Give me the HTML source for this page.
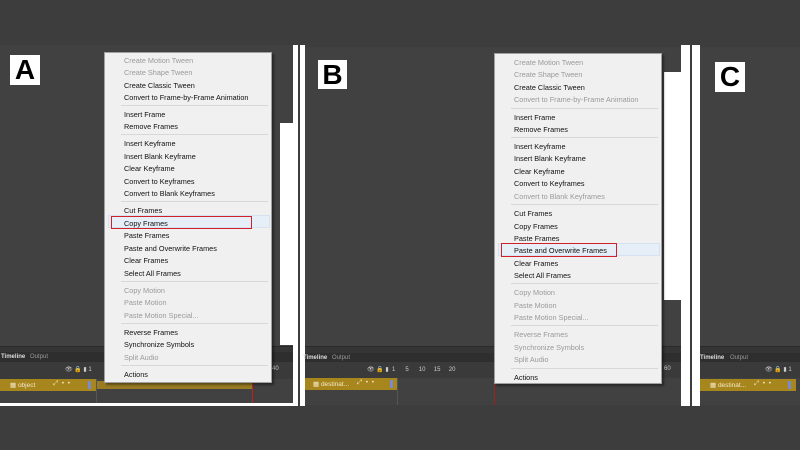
<!DOCTYPE html>
<html><head><meta charset="utf-8"><style>
*{margin:0;padding:0;box-sizing:border-box}
body{width:800px;height:450px;background:#3d3d3d;position:relative;overflow:hidden;font-family:"Liberation Sans",sans-serif}
.a{position:absolute}
.panel{background:#414141}
.lbl{background:#fff;color:#000;font-weight:bold;font-size:28px;text-align:center;line-height:30px}
.menu{position:absolute;background:#f0f0f0;border:1px solid #a0a0a0;box-shadow:2px 2px 2px rgba(0,0,0,.4);width:168px}
.menu div{position:absolute;left:19px;font-size:7.3px;color:#111;white-space:nowrap;line-height:9px}
.menu div.g{color:#9a9a9a}
.menu i{position:absolute;left:16px;right:3px;height:1px;background:#d8d8d8}
.sel{position:absolute;border:1.5px solid #d0202a}
.hl{position:absolute;background:#e6eef8;border:1px solid #d4e2f2}
.tabs{background:#2e2e2e}
.tab{position:absolute;font-size:6px;color:#ccc;top:2px}
.gold{background:#a8861e}
.txt{font-size:6.5px;color:#f3e9c8}
.ruler{font-size:6px;color:#ccc}
</style></head><body>

<!-- Panel A -->
<div class="a panel" style="left:0;top:45px;width:293px;height:358px"></div>
<div class="a" style="left:280px;top:123px;width:13px;height:222px;background:#fff"></div>
<div class="a" style="left:293px;top:45px;width:5px;height:361px;background:#fff"></div>
<div class="a" style="left:0;top:403px;width:298px;height:3px;background:#fff"></div>
<div class="a" style="left:0;top:346px;width:293px;height:6px;background:#353535;border-top:1px solid #2a2a2a"></div>
<div class="a tabs" style="left:0;top:352px;width:293px;height:10px"><span class="tab" style="left:1px;color:#ddd;font-weight:bold">Timeline</span><span class="tab" style="left:30px;color:#999">Output</span></div>
<div class="a" style="left:0;top:362px;width:293px;height:17px;background:#3a3a3a"></div>
<div class="a ruler" style="left:65px;top:366px">👁 🔒 ▮ 1</div>
<div class="a ruler" style="left:272px;top:366px">40</div>
<div class="a gold" style="left:0;top:379px;width:96px;height:12px"></div>
<div class="a gold" style="left:96px;top:381px;width:156px;height:8px;opacity:.85"></div>
<div class="a txt" style="left:10px;top:381px">▦ object</div>
<div class="a txt" style="left:53px;top:380px">⤢ &nbsp;• &nbsp;•</div>
<div class="a" style="left:88px;top:381px;width:3px;height:8px;background:#7a8ad0"></div>
<div class="a" style="left:252px;top:379px;width:1px;height:24px;background:#c02020"></div>
<div class="a" style="left:96px;top:379px;width:1px;height:24px;background:#555"></div>
<div class="a lbl" style="left:10px;top:55px;width:30px;height:30px">A</div>

<!-- Panel B -->
<div class="a" style="left:300px;top:45px;width:5px;height:361px;background:#fff"></div>
<div class="a panel" style="left:305px;top:47px;width:376px;height:358px"></div>
<div class="a" style="left:664px;top:72px;width:17px;height:228px;background:#fff"></div>
<div class="a" style="left:681px;top:45px;width:9px;height:361px;background:#fff"></div>
<div class="a" style="left:692px;top:45px;width:8px;height:361px;background:#fff"></div>
<div class="a" style="left:305px;top:346px;width:376px;height:7px;background:#353535;border-top:1px solid #2a2a2a"></div>
<div class="a tabs" style="left:305px;top:353px;width:376px;height:9px"><span class="tab" style="left:-2px;color:#ddd;font-weight:bold">Timeline</span><span class="tab" style="left:27px;color:#999">Output</span></div>
<div class="a" style="left:305px;top:362px;width:376px;height:16px;background:#3a3a3a"></div>
<div class="a ruler" style="left:367px;top:366px">👁 🔒 ▮ &nbsp;1 &nbsp;&nbsp;&nbsp;&nbsp;&nbsp;5 &nbsp;&nbsp;&nbsp;&nbsp;&nbsp;10 &nbsp;&nbsp;&nbsp;&nbsp;15 &nbsp;&nbsp;&nbsp;&nbsp;20</div>
<div class="a ruler" style="left:664px;top:366px">60</div>
<div class="a gold" style="left:305px;top:378px;width:92px;height:12px"></div>
<div class="a txt" style="left:313px;top:380px">▦ destinat...</div>
<div class="a txt" style="left:357px;top:379px">⤢ &nbsp;• &nbsp;•</div>
<div class="a" style="left:390px;top:380px;width:3px;height:8px;background:#7a8ad0"></div>
<div class="a" style="left:494px;top:362px;width:1px;height:43px;background:#a02020"></div>
<div class="a" style="left:397px;top:378px;width:1px;height:27px;background:#555"></div>
<div class="a lbl" style="left:318px;top:60px;width:29px;height:29px">B</div>

<!-- Panel C -->
<div class="a panel" style="left:700px;top:47px;width:100px;height:358px"></div>
<div class="a" style="left:700px;top:346px;width:100px;height:7px;background:#353535;border-top:1px solid #2a2a2a"></div>
<div class="a tabs" style="left:700px;top:353px;width:100px;height:9px"><span class="tab" style="left:0;color:#ddd;font-weight:bold">Timeline</span><span class="tab" style="left:30px;color:#999">Output</span></div>
<div class="a" style="left:700px;top:362px;width:100px;height:16px;background:#3a3a3a"></div>
<div class="a ruler" style="left:765px;top:366px">👁 🔒 ▮ 1</div>
<div class="a gold" style="left:700px;top:379px;width:96px;height:12px"></div>
<div class="a txt" style="left:710px;top:381px">▦ destinat...</div>
<div class="a txt" style="left:754px;top:380px">⤢ &nbsp;• &nbsp;•</div>
<div class="a" style="left:788px;top:381px;width:3px;height:8px;background:#7a8ad0"></div>
<div class="a lbl" style="left:715px;top:62px;width:30px;height:30px">C</div>

<!-- Menu A -->
<div class="menu" style="left:104px;top:52px;height:331px">
<div class="g" style="top:3px">Create Motion Tween</div>
<div class="g" style="top:15px">Create Shape Tween</div>
<div style="top:28px">Create Classic Tween</div>
<div style="top:40px">Convert to Frame-by-Frame Animation</div>
<i style="top:52px"></i>
<div style="top:57px">Insert Frame</div>
<div style="top:69px">Remove Frames</div>
<i style="top:81px"></i>
<div style="top:86px">Insert Keyframe</div>
<div style="top:99px">Insert Blank Keyframe</div>
<div style="top:111px">Clear Keyframe</div>
<div style="top:124px">Convert to Keyframes</div>
<div style="top:136px">Convert to Blank Keyframes</div>
<i style="top:148px"></i>
<div style="top:153px">Cut Frames</div>
<span class="hl" style="left:3px;top:162px;width:162px;height:13px"></span>
<span class="sel" style="left:6px;top:163px;width:141px;height:13px"></span>
<div style="top:166px">Copy Frames</div>
<div style="top:178px">Paste Frames</div>
<div style="top:191px">Paste and Overwrite Frames</div>
<div style="top:203px">Clear Frames</div>
<div style="top:216px">Select All Frames</div>
<i style="top:228px"></i>
<div class="g" style="top:233px">Copy Motion</div>
<div class="g" style="top:245px">Paste Motion</div>
<div class="g" style="top:258px">Paste Motion Special...</div>
<i style="top:270px"></i>
<div style="top:275px">Reverse Frames</div>
<div style="top:287px">Synchronize Symbols</div>
<div class="g" style="top:300px">Split Audio</div>
<i style="top:312px"></i>
<div style="top:317px">Actions</div>
</div>

<!-- Menu B -->
<div class="menu" style="left:494px;top:53px;height:331px">
<div class="g" style="top:4px">Create Motion Tween</div>
<div class="g" style="top:16px">Create Shape Tween</div>
<div style="top:29px">Create Classic Tween</div>
<div class="g" style="top:41px">Convert to Frame-by-Frame Animation</div>
<i style="top:54px"></i>
<div style="top:59px">Insert Frame</div>
<div style="top:71px">Remove Frames</div>
<i style="top:83px"></i>
<div style="top:88px">Insert Keyframe</div>
<div style="top:100px">Insert Blank Keyframe</div>
<div style="top:113px">Clear Keyframe</div>
<div style="top:125px">Convert to Keyframes</div>
<div class="g" style="top:138px">Convert to Blank Keyframes</div>
<i style="top:150px"></i>
<div style="top:155px">Cut Frames</div>
<div style="top:168px">Copy Frames</div>
<div style="top:180px">Paste Frames</div>
<span class="hl" style="left:3px;top:189px;width:162px;height:13px"></span>
<span class="sel" style="left:6px;top:189px;width:116px;height:14px"></span>
<div style="top:192px">Paste and Overwrite Frames</div>
<div style="top:205px">Clear Frames</div>
<div style="top:217px">Select All Frames</div>
<i style="top:229px"></i>
<div class="g" style="top:234px">Copy Motion</div>
<div class="g" style="top:247px">Paste Motion</div>
<div class="g" style="top:259px">Paste Motion Special...</div>
<i style="top:271px"></i>
<div class="g" style="top:276px">Reverse Frames</div>
<div class="g" style="top:289px">Synchronize Symbols</div>
<div class="g" style="top:301px">Split Audio</div>
<i style="top:314px"></i>
<div style="top:319px">Actions</div>
</div>
</body></html>
